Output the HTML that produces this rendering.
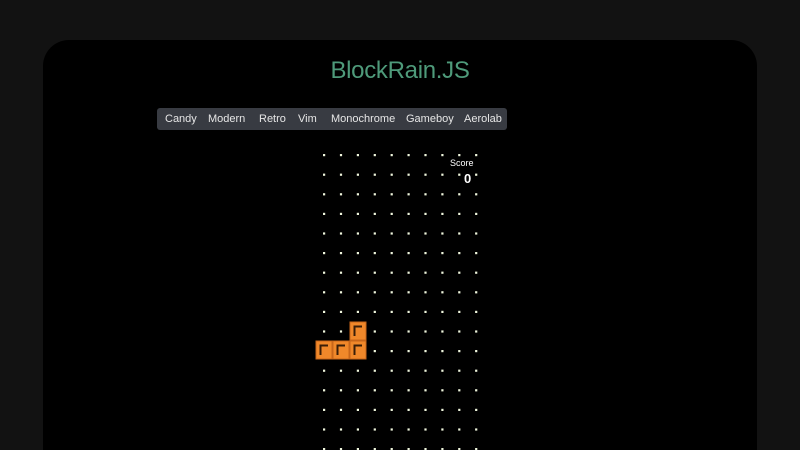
<!DOCTYPE html>
<html><head><meta charset="utf-8"><style>
html,body{margin:0;padding:0;width:800px;height:450px;overflow:hidden;background:#121212;font-family:"Liberation Sans",sans-serif}
.box{position:absolute;left:43px;top:40px;width:714px;height:410px;background:#000;border-radius:26px 26px 0 0}
.title{position:absolute;left:0;width:800px;top:57px;text-align:center;color:#4e9a7a;font-size:24px;letter-spacing:-0.3px}
.menu{position:absolute;left:157px;top:108px;width:350px;height:22px;background:#383b42;border-radius:3px;color:#e6e6e6;font-size:11px;line-height:22px}
.menu span{position:absolute;top:0}
.score{position:absolute;color:#fff;font-size:9px;left:450px;top:158px}
.zero{position:absolute;color:#fff;font-size:13px;font-weight:bold;left:464px;top:171px}
</style></head><body>
<div class="box"></div>
<div class="title">BlockRain.JS</div>
<div class="menu">
<span style="left:8px">Candy</span><span style="left:51px">Modern</span><span style="left:102px">Retro</span><span style="left:141px">Vim</span><span style="left:174px">Monochrome</span><span style="left:249px">Gameboy</span><span style="left:307px">Aerolab</span>
</div>
<svg width="800" height="450" style="position:absolute;left:0;top:0">
<g fill="#eef5dc" id="dots"></g>
<g id="blocks"></g>
</svg>
<div class="score">Score</div>
<div class="zero">0</div>
<script>
var d=document.getElementById('dots'),s='';
for(var r=0;r<16;r++)for(var c=0;c<10;c++){s+='<rect x="'+(323+c*16.9).toFixed(1)+'" y="'+(154+r*19.6).toFixed(1)+'" width="2.2" height="2.2"/>';}
d.innerHTML=s;
var b=[[316,341],[333,341],[350,341],[350,322]],t='';
b.forEach(function(p){var x=p[0],y=p[1];
t+='<rect x="'+x+'" y="'+y+'" width="16" height="18" fill="#f0882a" stroke="#c8661a" stroke-width="1"/>';
t+='<path d="M'+(x+4.5)+' '+(y+14)+'V'+(y+4.5)+'H'+(x+12)+'" fill="none" stroke="#3a1e08" stroke-width="2"/>';});
document.getElementById('blocks').innerHTML=t;
</script>
</body></html>
